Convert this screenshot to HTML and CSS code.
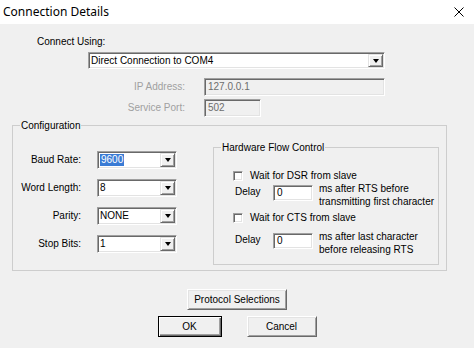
FILE: index.html
```html
<!DOCTYPE html>
<html lang="en">
<head>
  <meta charset="UTF-8">
  <title>Connection Details</title>
  <link rel="stylesheet" href="styles.css">
</head>
<body>

<div class="window">
  <!--标题栏-->
  <div class="titlebar">
    <span class="title">Connection Details</span>
    <svg class="close" width="10" height="10" viewBox="0 0 10 10">
      <path d="M0.5 0.5 L9.5 9.5 M9.5 0.5 L0.5 9.5" stroke="#000" stroke-width="1" fill="none"/>
    </svg>
  </div>

  <div class="dialog">
    <div class="connect-label">Connect Using:</div>
    <div class="combo combo-wide">
      <span class="combo-text">Direct Connection to COM4</span>
      <span class="combo-btn"><i class="arrow"></i></span>
    </div>

    <div class="addr-row">
      <span class="addr-label">IP Address:</span>
      <div class="field field-disabled field-ip">127.0.0.1</div>
    </div>
    <div class="addr-row addr-row-port">
      <span class="addr-label">Service Port:</span>
      <div class="field field-disabled field-port">502</div>
    </div>

    <fieldset class="group group-config">
      <legend>Configuration</legend>
      <div class="config-body">
        <!--串口参数-->
        <div class="serial">
          <div class="serial-row">
            <span class="serial-label">Baud Rate:</span>
            <div class="combo combo-small">
              <span class="combo-text"><span class="sel">9600</span></span>
              <span class="combo-btn"><i class="arrow"></i></span>
            </div>
          </div>
          <div class="serial-row">
            <span class="serial-label">Word Length:</span>
            <div class="combo combo-small">
              <span class="combo-text">8</span>
              <span class="combo-btn"><i class="arrow"></i></span>
            </div>
          </div>
          <div class="serial-row">
            <span class="serial-label">Parity:</span>
            <div class="combo combo-small">
              <span class="combo-text">NONE</span>
              <span class="combo-btn"><i class="arrow"></i></span>
            </div>
          </div>
          <div class="serial-row">
            <span class="serial-label">Stop Bits:</span>
            <div class="combo combo-small">
              <span class="combo-text">1</span>
              <span class="combo-btn"><i class="arrow"></i></span>
            </div>
          </div>
        </div>

        <!--硬件流控-->
        <fieldset class="group group-flow">
          <legend>Hardware Flow Control</legend>
          <div class="check-row">
            <span class="check"></span>
            <span class="check-text">Wait for DSR from slave</span>
          </div>
          <div class="delay-row">
            <span class="delay-label">Delay</span>
            <div class="field field-delay">0</div>
            <div class="delay-note">ms after RTS before<br>transmitting first character</div>
          </div>
          <div class="check-row check-row-2">
            <span class="check"></span>
            <span class="check-text">Wait for CTS from slave</span>
          </div>
          <div class="delay-row delay-row-2">
            <span class="delay-label">Delay</span>
            <div class="field field-delay">0</div>
            <div class="delay-note">ms after last character<br>before releasing RTS</div>
          </div>
        </fieldset>
      </div>
    </fieldset>

    <div class="btn-row">
      <button class="btn btn-proto">Protocol Selections</button>
    </div>
    <div class="btn-row btn-row-main">
      <button class="btn btn-default btn-ok">OK</button>
      <button class="btn btn-cancel">Cancel</button>
    </div>
  </div>
</div>

</body>
</html>
```

FILE: styles.css
```css
* {
  margin: 0;
  padding: 0;
  box-sizing: border-box;
}

body {
  width: 474px;
  height: 348px;
  overflow: hidden;
  background-color: #f0f0f0;
  font: 10px/12px "Liberation Sans", Arial, sans-serif;
  color: #000;
}

.titlebar {
  height: 24px;
  background-color: #fff;
  display: flex;
  align-items: center;
  justify-content: space-between;
  padding: 0 10px 0 3px;
}

.title {
  font: 12px/16px "Noto Sans", "Open Sans", sans-serif;
}

.close {
  display: block;
}

.dialog {
  height: 324px;
  background-color: #f0f0f0;
}

.connect-label {
  padding: 12px 0 0 37px;
  line-height: 12px;
}

/*
  下拉框：白色底，凹陷边框，右边一个小按钮
*/
.combo {
  height: 17px;
  display: flex;
  background-color: #fff;
  border-top: 1px solid #a0a0a0;
  border-left: 1px solid #a0a0a0;
  border-right: 1px solid #fff;
  border-bottom: 1px solid #fff;
  box-shadow: inset 1px 1px 0 #696969, inset -1px -1px 0 #e3e3e3;
  padding: 1px;
}

.combo-wide {
  width: 297px;
  margin: 4px 0 0 88px;
}

.combo-text {
  flex: 1;
  padding-left: 1px;
  line-height: 13px;
  white-space: nowrap;
}

.combo-btn {
  width: 15px;
  display: flex;
  align-items: center;
  justify-content: center;
  background-color: #f0f0f0;
  border-top: 1px solid #e3e3e3;
  border-left: 1px solid #e3e3e3;
  border-right: 1px solid #696969;
  border-bottom: 1px solid #696969;
  box-shadow: inset 1px 1px 0 #fff, inset -1px -1px 0 #a0a0a0;
}

.arrow {
  width: 0;
  height: 0;
  border-left: 3.5px solid transparent;
  border-right: 3.5px solid transparent;
  border-top: 4px solid #000;
}

.field {
  border-top: 1px solid #a0a0a0;
  border-left: 1px solid #a0a0a0;
  border-right: 1px solid #fff;
  border-bottom: 1px solid #fff;
  box-shadow: inset 1px 1px 0 #696969, inset -1px -1px 0 #e3e3e3;
  padding: 2px 0 0 3px;
  background-color: #fff;
  line-height: 12px;
}

.field-disabled {
  background-color: #f0f0f0;
  color: #6d6d6d;
}

.addr-row {
  display: flex;
  align-items: center;
  margin-top: 9px;
}

.addr-row-port {
  margin-top: 3px;
}

.addr-label {
  width: 185px;
  text-align: right;
  color: #a0a0a0;
  margin-right: 19px;
}

.field-ip {
  width: 181px;
  height: 18px;
}

.field-port {
  width: 57px;
  height: 18px;
}

/* 分组框 */
.group {
  border: 1px solid #cdcdcd;
  min-width: 0;
}

.group legend {
  margin-left: 7px;
  padding: 0 1px;
  line-height: 13px;
}

.group-config {
  width: 435px;
  margin: 2px 0 0 12px;
  padding-bottom: 5px;
}

.config-body {
  display: flex;
  align-items: flex-start;
}

.serial {
  margin-top: 19px;
  display: flex;
  flex-direction: column;
  gap: 10px;
}

.serial-row {
  display: flex;
  align-items: center;
  height: 18px;
}

.serial-label {
  width: 68px;
  text-align: right;
  margin-right: 16px;
}

.combo-small {
  width: 80px;
  height: 18px;
}

.combo-small .combo-text {
  line-height: 14px;
  padding-left: 1px;
}

.sel {
  display: inline-block;
  background-color: #3a7bd5;
  color: #fff;
  padding: 0 1px;
  line-height: 12px;
}

.group-flow {
  width: 226px;
  margin: 9px 0 0 36px;
  padding-bottom: 8px;
}

.check-row {
  display: flex;
  align-items: center;
  height: 13px;
  margin-top: 15px;
  padding-left: 19px;
  line-height: 13px;
}

.check-row-2 {
  margin-top: 3px;
}

.check {
  width: 10px;
  height: 10px;
  background-color: #fff;
  border-top: 1px solid #a0a0a0;
  border-left: 1px solid #a0a0a0;
  border-right: 1px solid #fff;
  border-bottom: 1px solid #fff;
  box-shadow: inset 1px 1px 0 #696969, inset -1px -1px 0 #e3e3e3;
  margin-right: 7px;
}

.delay-row {
  display: flex;
  align-items: flex-start;
  padding-left: 21px;
  height: 26px;
}

.delay-row-2 {
  margin-top: 6px;
}

.delay-label {
  width: 38px;
  margin-top: 3px;
  line-height: 14px;
}

.field-delay {
  width: 40px;
  height: 16px;
  margin-top: 3px;
  padding-top: 1px;
}

.delay-note {
  margin-left: 6px;
  line-height: 13px;
}

/* 按钮 */
.btn-row {
  display: flex;
  justify-content: center;
  gap: 25px;
  margin-top: 18px;
}

.btn-row-main {
  margin-top: 6px;
}

.btn {
  height: 21px;
  font: 10px/12px "Liberation Sans", Arial, sans-serif;
  color: #000;
  background-color: #f0f0f0;
  border-top: 1px solid #fff;
  border-left: 1px solid #fff;
  border-right: 1px solid #696969;
  border-bottom: 1px solid #696969;
  box-shadow: inset 1px 1px 0 #e3e3e3, inset -1px -1px 0 #a0a0a0;
}

.btn-proto {
  width: 100px;
}

.btn-ok {
  width: 64px;
}

.btn-cancel {
  width: 70px;
}

.btn-default {
  border: 1px solid #000;
  box-shadow: inset 1px 1px 0 #fff, inset -1px -1px 0 #696969, inset -2px -2px 0 #a0a0a0;
}
```
